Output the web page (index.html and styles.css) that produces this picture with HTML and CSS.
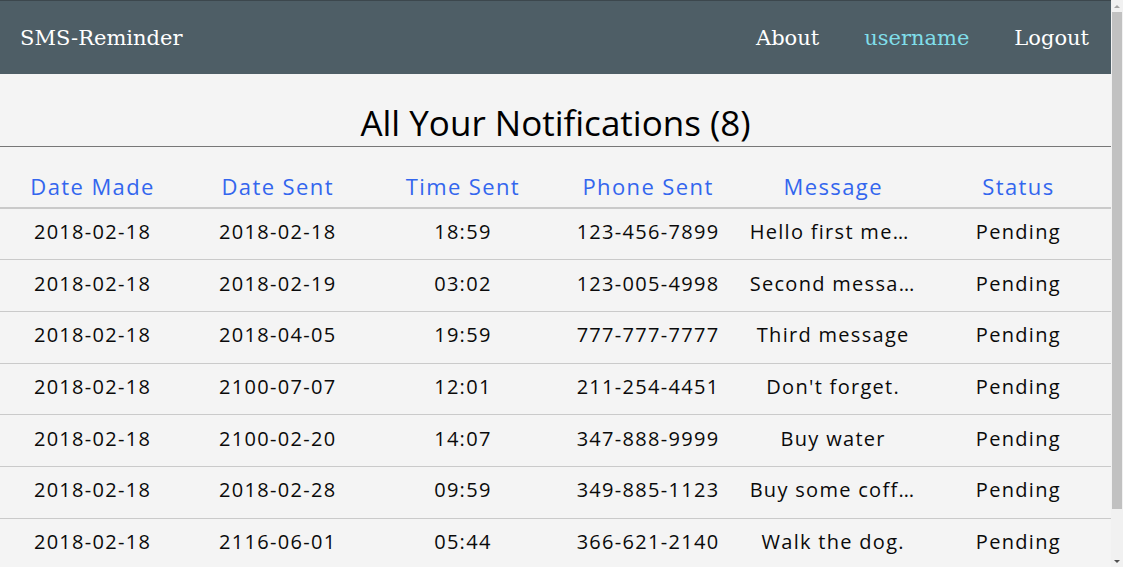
FILE: index.html
```html
<!DOCTYPE html>
<html>
<head>
<meta charset="utf-8">
<title>SMS-Reminder</title>
<link rel="stylesheet" href="styles.css">
</head>
<body>
<div class="page">
  <nav class="navbar">
    <a class="brand" href="#">SMS-Reminder</a>
    <ul class="nav-links">
      <li><a href="#">About</a></li>
      <li><a class="user" href="#">username</a></li>
      <li><a href="#">Logout</a></li>
    </ul>
  </nav>
  <main class="content">
    <h1 class="title">All Your Notifications (8)</h1>
    <table class="notes">
      <thead>
        <tr><th>Date Made</th><th>Date Sent</th><th>Time Sent</th><th>Phone Sent</th><th>Message</th><th>Status</th></tr>
      </thead>
      <tbody>
        <tr><td>2018-02-18</td><td>2018-02-18</td><td>18:59</td><td>123-456-7899</td><td class="msg">Hello first message</td><td>Pending</td></tr>
        <tr><td>2018-02-18</td><td>2018-02-19</td><td>03:02</td><td>123-005-4998</td><td class="msg">Second message here</td><td>Pending</td></tr>
        <tr><td>2018-02-18</td><td>2018-04-05</td><td>19:59</td><td>777-777-7777</td><td class="msg">Third message</td><td>Pending</td></tr>
        <tr><td>2018-02-18</td><td>2100-07-07</td><td>12:01</td><td>211-254-4451</td><td class="msg">Don't forget.</td><td>Pending</td></tr>
        <tr><td>2018-02-18</td><td>2100-02-20</td><td>14:07</td><td>347-888-9999</td><td class="msg">Buy water</td><td>Pending</td></tr>
        <tr><td>2018-02-18</td><td>2018-02-28</td><td>09:59</td><td>349-885-1123</td><td class="msg">Buy some coffee</td><td>Pending</td></tr>
        <tr><td>2018-02-18</td><td>2116-06-01</td><td>05:44</td><td>366-621-2140</td><td class="msg">Walk the dog.</td><td>Pending</td></tr>
        <tr><td>2018-02-18</td><td>2018-03-01</td><td>10:30</td><td>555-123-4567</td><td class="msg">Call mom</td><td>Pending</td></tr>
      </tbody>
    </table>
  </main>
</div>
<div class="scrollbar" aria-hidden="true">
  <div class="arrow up"></div>
  <div class="track"><div class="thumb"></div></div>
  <div class="arrow down"></div>
</div>
</body>
</html>
```
FILE: styles.css
```css
html, body {
  margin: 0;
  padding: 0;
  background: #f4f4f4;
}
.page {
  width: 1111px;
}

.navbar {
  display: flex;
  align-items: center;
  justify-content: space-between;
  height: 74px;
  padding: 0 22px 0 20px;
  background: #4e5e66;
  border-top: 1px solid #3c474d;
  box-sizing: border-box;
  font-family: "DejaVu Serif", "Liberation Serif", serif;
}
.navbar a {
  color: #ffffff;
  text-decoration: none;
  font-size: 21px;
}
.navbar .brand {
  font-size: 21px;
}
.nav-links {
  display: flex;
  gap: 45px;
  list-style: none;
  margin: 0;
  padding: 0;
}
.navbar a.user {
  color: #80deea;
}

.content {
  font-family: "Open Sans", sans-serif;
}
.title {
  margin: 0;
  padding: 28px 0 2px;
  text-align: center;
  font-weight: 400;
  font-size: 35px;
  line-height: 42px;
  color: #000;
  border-bottom: 1px solid #777;
}
.notes {
  width: 100%;
  border-collapse: collapse;
  table-layout: fixed;
}
.notes th {
  font-weight: 400;
  font-size: 22px;
  letter-spacing: 1.4px;
  color: #3366ee;
  height: 61px;
  padding: 0 4px 6px;
  vertical-align: bottom;
  box-sizing: border-box;
  border-bottom: 2px solid #cacaca;
}
.notes td {
  height: 51.7px;
  padding: 0 9px 5px;
  text-align: center;
  font-size: 20px;
  letter-spacing: 1.3px;
  color: #0a0a0a;
  border-bottom: 1.5px solid #cacaca;
  white-space: nowrap;
  overflow: hidden;
  text-overflow: ellipsis;
  box-sizing: border-box;
}

.scrollbar {
  position: fixed;
  top: 0;
  right: 0;
  width: 12px;
  height: 100%;
  background: #f1f1f1;
  display: flex;
  flex-direction: column;
}
.scrollbar .arrow {
  height: 12px;
  display: flex;
  align-items: center;
  justify-content: center;
}
.scrollbar .arrow::before {
  content: "";
  border-left: 3px solid transparent;
  border-right: 3px solid transparent;
}
.scrollbar .up::before { border-bottom: 3px solid #a3a3a3; }
.scrollbar .down::before { border-top: 3px solid #505050; }
.scrollbar .track {
  flex: 1;
  padding: 0 1px;
}
.scrollbar .thumb {
  height: 91.5%;
  background: #c1c1c1;
}
```
